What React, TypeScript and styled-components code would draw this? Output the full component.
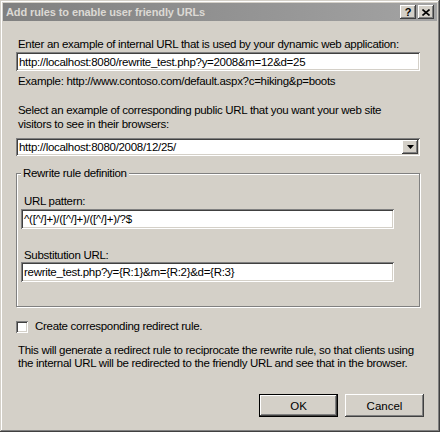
import React from "react";
import styled, { createGlobalStyle } from "styled-components";

const Global = createGlobalStyle`
  html, body { margin: 0; padding: 0; background: #d4d0c8; }
  body { font-family: "Liberation Sans", Arial, sans-serif; }
  *, *::before, *::after { box-sizing: border-box; }
`;

const FACE = "#d4d0c8";

const Window = styled.div`
  width: 440px;
  height: 432px;
  background: ${FACE};
  display: flex;
  flex-direction: column;
  padding: 3px;
  box-shadow: inset -1px -1px #404040, inset 1px 1px ${FACE}, inset -2px -2px #808080,
    inset 2px 2px #ffffff;
  font-family: "Liberation Sans", Arial, sans-serif;
  font-size: 11.5px;
  letter-spacing: -0.3px;
  color: #000;
`;

const TitleBar = styled.div`
  height: 18px;
  display: flex;
  align-items: center;
  padding: 0 3px 0 3px;
  background: linear-gradient(to right, #808080, #a3a3a3);
`;

const Title = styled.span`
  flex: 1;
  color: #dcd9d4;
  font-weight: bold;
  font-size: 11px;
  letter-spacing: -0.1px;
  white-space: nowrap;
`;

const CaptionButton = styled.div<{ $gap?: number }>`
  width: 16px;
  height: 14px;
  margin-left: ${(p) => p.$gap ?? 0}px;
  background: ${FACE};
  box-shadow: inset -1px -1px #404040, inset 1px 1px #ffffff, inset -2px -2px #808080;
  display: flex;
  align-items: center;
  justify-content: center;
  font-weight: bold;
  font-size: 11px;
  letter-spacing: 0;
  line-height: 1;
  color: #000;
`;

const Body = styled.div`
  flex: 1;
  display: flex;
  flex-direction: column;
  padding: 17px 17px 12px 13px;
`;

const Label = styled.div<{ $top?: number; $indent?: number; $lh?: number }>`
  margin-top: ${(p) => p.$top ?? 0}px;
  padding-left: ${(p) => p.$indent ?? 2}px;
  line-height: ${(p) => p.$lh ?? 13}px;
  white-space: nowrap;
`;

const TextBox = styled.div<{ $top?: number; $h?: number }>`
  margin-top: ${(p) => p.$top ?? 0}px;
  height: ${(p) => p.$h ?? 19}px;
  background: #fff;
  box-shadow: inset 1px 1px #808080, inset -1px -1px #ffffff, inset 2px 2px #404040,
    inset -2px -2px ${FACE};
  display: flex;
  align-items: center;
  padding: 0 3px;
  white-space: nowrap;
  overflow: hidden;
`;

const Combo = styled(TextBox)`
  padding-right: 2px;
`;

const ComboText = styled.span`
  flex: 1;
`;

const DropButton = styled.div`
  width: 16px;
  height: 14px;
  background: ${FACE};
  box-shadow: inset -1px -1px #404040, inset 1px 1px #ffffff, inset -2px -2px #808080;
  display: flex;
  align-items: center;
  justify-content: center;
`;

const Group = styled.div`
  position: relative;
  margin-top: 17px;
  border: 1px solid #808080;
  box-shadow: 1px 1px 0 #ffffff, inset 1px 1px 0 #ffffff;
  padding: 21px 25px 24px 4px;
  display: flex;
  flex-direction: column;
`;

const Legend = styled.span`
  position: absolute;
  top: -8px;
  left: 4px;
  padding: 0 2px;
  background: ${FACE};
  line-height: 14px;
`;

const CheckRow = styled.div`
  margin-top: 13px;
  display: flex;
  align-items: center;
  gap: 7px;
  line-height: 13px;
`;

const CheckBox = styled.div`
  width: 12px;
  height: 12px;
  background: #fff;
  box-shadow: inset 1px 1px #808080, inset -1px -1px #ffffff, inset 2px 2px #404040,
    inset -2px -2px ${FACE};
`;

const Paragraph = styled.div`
  margin-top: 11px;
  padding-left: 2px;
  line-height: 13px;
  white-space: nowrap;
`;

const ButtonRow = styled.div`
  margin-top: auto;
  margin-right: -4px;
  display: flex;
  justify-content: flex-end;
  gap: 7px;
`;

const Button = styled.div<{ $default?: boolean }>`
  width: 79px;
  height: 23px;
  background: ${FACE};
  display: flex;
  align-items: center;
  justify-content: center;
  letter-spacing: 0;
  box-shadow: ${(p) =>
    p.$default
      ? `inset 0 0 0 1px #000, inset -2px -2px #404040, inset 2px 2px #ffffff, inset -3px -3px #808080`
      : `inset -1px -1px #404040, inset 1px 1px #ffffff, inset -2px -2px #808080`};
`;

export default function App() {
  return (
    <>
      <Global />
      <Window>
        <TitleBar>
          <Title>Add rules to enable user friendly URLs</Title>
          <CaptionButton>?</CaptionButton>
          <CaptionButton $gap={2}>
            <svg width="8" height="7" viewBox="0 0 8 7">
              <path d="M0.5 0.5 L7.5 6.5 M7.5 0.5 L0.5 6.5" stroke="#000" strokeWidth="1.6" />
            </svg>
          </CaptionButton>
        </TitleBar>
        <Body>
          <Label>Enter an example of internal URL that is used by your dynamic web application:</Label>
          <TextBox $top={1}>http://localhost:8080/rewrite_test.php?y=2008&amp;m=12&amp;d=25</TextBox>
          <Label $top={4}>Example: http://www.contoso.com/default.aspx?c=hiking&amp;p=boots</Label>
          <Label $top={15} $lh={14}>
            Select an example of corresponding public URL that you want your web site
            <br />
            visitors to see in their browsers:
          </Label>
          <Combo $top={7} $h={18}>
            <ComboText>http://localhost:8080/2008/12/25/</ComboText>
            <DropButton>
              <svg width="7" height="4" viewBox="0 0 7 4">
                <path d="M0 0 H7 L3.5 4 Z" fill="#000" />
              </svg>
            </DropButton>
          </Combo>
          <Group>
            <Legend>Rewrite rule definition</Legend>
            <Label $indent={3}>URL pattern:</Label>
            <TextBox $top={1} $h={20}>^([^/]+)/([^/]+)/([^/]+)/?$</TextBox>
            <Label $top={20} $indent={3}>Substitution URL:</Label>
            <TextBox $h={20}>rewrite_test.php?y={"{R:1}"}&amp;m={"{R:2}"}&amp;d={"{R:3}"}</TextBox>
          </Group>
          <CheckRow>
            <CheckBox />
            <span>Create corresponding redirect rule.</span>
          </CheckRow>
          <Paragraph>
            This will generate a redirect rule to reciprocate the rewrite rule, so that clients using
            <br />
            the internal URL will be redirected to the friendly URL and see that in the browser.
          </Paragraph>
          <ButtonRow>
            <Button $default>OK</Button>
            <Button>Cancel</Button>
          </ButtonRow>
        </Body>
      </Window>
    </>
  );
}
